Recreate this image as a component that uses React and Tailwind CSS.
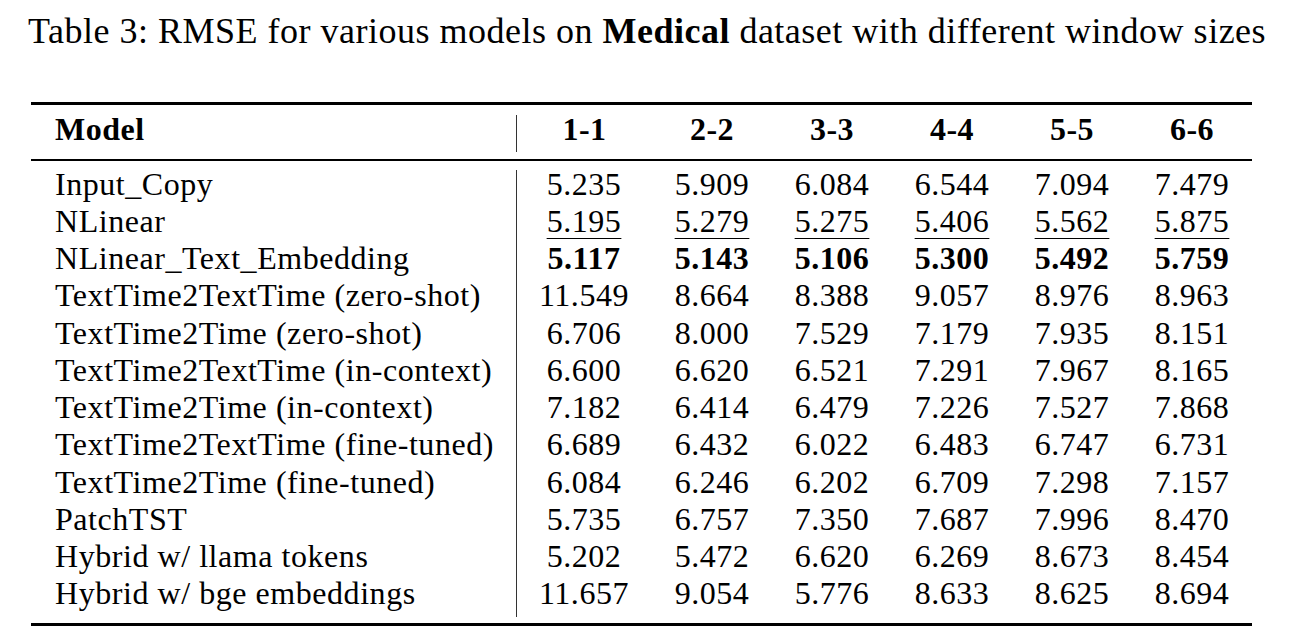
import React from "react";

const rows = [
  ["Input_Copy", ["5.235", "5.909", "6.084", "6.544", "7.094", "7.479"], ""],
  ["NLinear", ["5.195", "5.279", "5.275", "5.406", "5.562", "5.875"], "u"],
  ["NLinear_Text_Embedding", ["5.117", "5.143", "5.106", "5.300", "5.492", "5.759"], "b"],
  ["TextTime2TextTime (zero-shot)", ["11.549", "8.664", "8.388", "9.057", "8.976", "8.963"], ""],
  ["TextTime2Time (zero-shot)", ["6.706", "8.000", "7.529", "7.179", "7.935", "8.151"], ""],
  ["TextTime2TextTime (in-context)", ["6.600", "6.620", "6.521", "7.291", "7.967", "8.165"], ""],
  ["TextTime2Time (in-context)", ["7.182", "6.414", "6.479", "7.226", "7.527", "7.868"], ""],
  ["TextTime2TextTime (fine-tuned)", ["6.689", "6.432", "6.022", "6.483", "6.747", "6.731"], ""],
  ["TextTime2Time (fine-tuned)", ["6.084", "6.246", "6.202", "6.709", "7.298", "7.157"], ""],
  ["PatchTST", ["5.735", "6.757", "7.350", "7.687", "7.996", "8.470"], ""],
  ["Hybrid w/ llama tokens", ["5.202", "5.472", "6.620", "6.269", "8.673", "8.454"], ""],
  ["Hybrid w/ bge embeddings", ["11.657", "9.054", "5.776", "8.633", "8.625", "8.694"], ""],
];

const heads = ["1-1", "2-2", "3-3", "4-4", "5-5", "6-6"];

export default function App() {
  return (
    <div className="w-[1291px] h-[637px] bg-white text-black overflow-hidden font-['Liberation_Serif',serif]">
      <div className="pl-[28px] pt-[11px] text-[36px] leading-[40px] tracking-[0.5px] whitespace-nowrap">
        Table 3: RMSE for various models on <span className="font-bold">Medical</span> dataset with different window sizes
      </div>
      <div className="ml-[31px] mt-[51px] w-[1221px]">
        <div className="h-[3px] bg-black" />
        <div className="grid grid-cols-[485px_136px_repeat(5,120px)] text-[32px] leading-[29px] tracking-[0.5px] font-bold pt-[10px] pb-[7px]">
          <div className="h-[37px] pl-[24px]">Model</div>
          {heads.map((h, i) => (
            <div key={h} className={"h-[37px] text-center " + (i === 0 ? "border-l border-[#333]" : "")}>{h}</div>
          ))}
        </div>
        <div className="h-[1.5px] bg-black" />
        <div className="grid grid-cols-[485px_136px_repeat(5,120px)] auto-rows-[37.27px] text-[32px] leading-[37.27px] tracking-[0.55px] pt-[5px] pb-[10px]">
          <div className="col-start-2 row-start-1 row-span-12 border-l border-[#333] mt-[4.5px] mb-[-4.5px]" />
          {rows.map(([name, vals, style], r) => (
            <React.Fragment key={name}>
              <div className="col-start-1 pl-[24px] whitespace-nowrap" style={{ gridRow: r + 1 }}>{name}</div>
              {vals.map((v, c) => (
                <div
                  key={c}
                  className={"text-center whitespace-nowrap " + (style === "b" ? "font-bold" : "")}
                  style={{ gridRow: r + 1, gridColumn: c + 2 }}
                >
                  <span className={style === "u" ? "underline decoration-1 underline-offset-[6px]" : ""}>{v}</span>
                </div>
              ))}
            </React.Fragment>
          ))}
        </div>
        <div className="h-[3px] bg-black" />
      </div>
    </div>
  );
}
